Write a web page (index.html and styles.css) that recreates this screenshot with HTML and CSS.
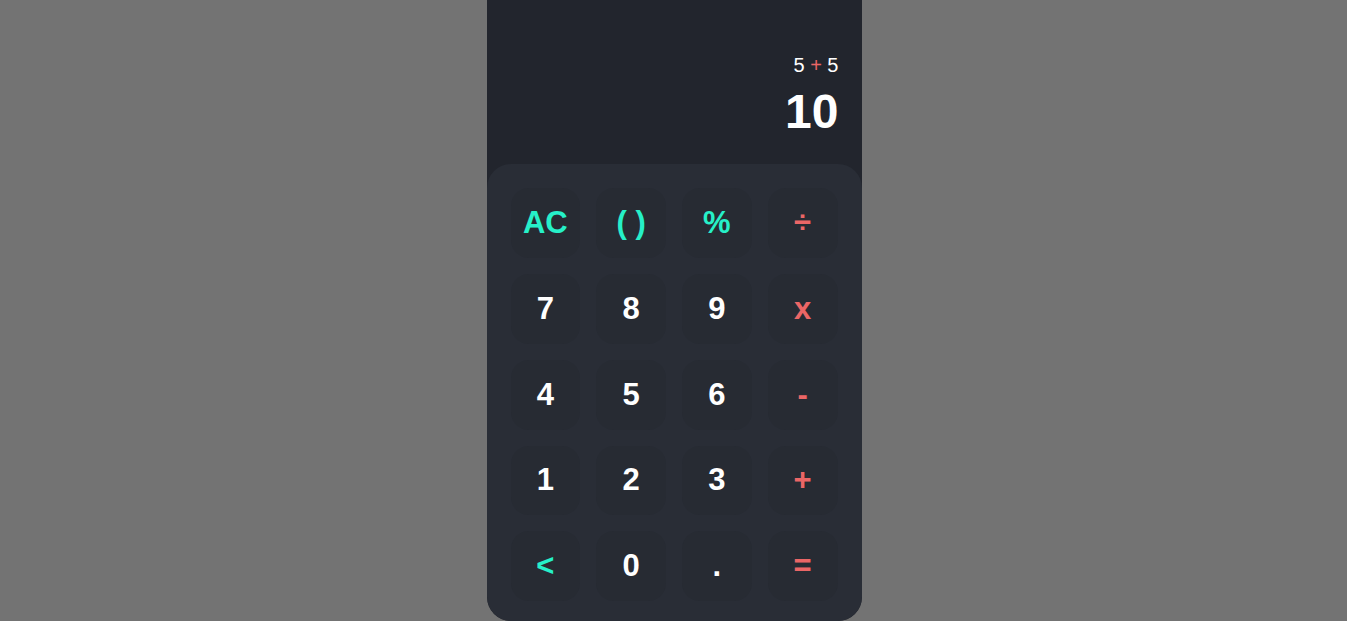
FILE: index.html
```html
<!DOCTYPE html>
<html lang="en">
<head>
<meta charset="utf-8">
<title>Calculator</title>
<link rel="stylesheet" href="styles.css">
</head>
<body>
<main class="calculator">
  <section class="display">
    <div class="expression">5 <span class="op">+</span> 5</div>
    <div class="result">10</div>
  </section>
  <section class="keypad">
    <button class="key accent">AC</button>
    <button class="key accent">( )</button>
    <button class="key accent">%</button>
    <button class="key operator">÷</button>

    <button class="key">7</button>
    <button class="key">8</button>
    <button class="key">9</button>
    <button class="key operator">x</button>

    <button class="key">4</button>
    <button class="key">5</button>
    <button class="key">6</button>
    <button class="key operator">-</button>

    <button class="key">1</button>
    <button class="key">2</button>
    <button class="key">3</button>
    <button class="key operator">+</button>

    <button class="key accent">&lt;</button>
    <button class="key">0</button>
    <button class="key">.</button>
    <button class="key operator">=</button>
  </section>
</main>
</body>
</html>
```

FILE: styles.css
```css
* {
  box-sizing: border-box;
}

html,
body {
  margin: 0;
  height: 100%;
}

body {
  background: #737373;
  display: flex;
  justify-content: center;
  padding-left: 1px;
  font-family: "Liberation Sans", Arial, sans-serif;
}

.calculator {
  width: 375px;
  height: 100vh;
  background: #22252d;
  border-radius: 0 0 24px 24px;
  display: flex;
  flex-direction: column;
  overflow: hidden;
}

.display {
  flex: 1;
  display: flex;
  flex-direction: column;
  align-items: flex-end;
  padding: 53px 23px 0;
  color: #ffffff;
}

.expression {
  font-size: 20px;
  line-height: 24px;
}

.expression .op {
  color: #eb6666;
}

.result {
  margin-top: 11px;
  font-size: 48px;
  font-weight: bold;
  line-height: 48px;
}

.keypad {
  background: #292d36;
  border-radius: 24px;
  padding: 24px 24px 20px;
  display: grid;
  grid-template-columns: repeat(4, 1fr);
  gap: 16px;
}

.key {
  aspect-ratio: 1;
  border: none;
  border-radius: 18px;
  background: #272b33;
  color: #ffffff;
  font-family: inherit;
  font-size: 31px;
  font-weight: bold;
  padding: 0;
  display: flex;
  align-items: center;
  justify-content: center;
}

.key.accent {
  color: #26f0c8;
}

.key.operator {
  color: #eb6666;
}
```
